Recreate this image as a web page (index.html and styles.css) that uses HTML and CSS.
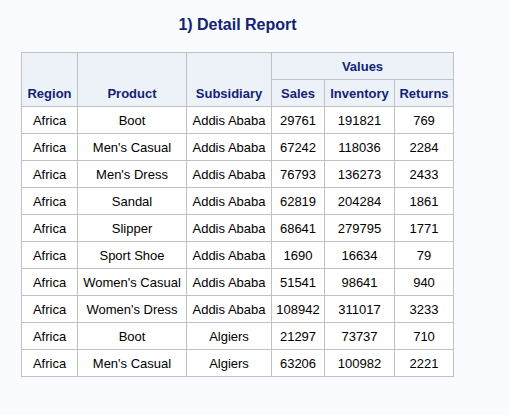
FILE: index.html
```html
<!DOCTYPE html>
<html>
<head>
<meta charset="utf-8">
<link rel="stylesheet" href="styles.css">
</head>
<body>
<div class="report">
  <h1 class="title">1) Detail Report</h1>
  <table class="table">
    <colgroup>
      <col class="c-region">
      <col class="c-product">
      <col class="c-sub">
      <col class="c-sales">
      <col class="c-inv">
      <col class="c-ret">
    </colgroup>
    <thead>
      <tr>
        <th rowspan="2" class="bottom">Region</th>
        <th rowspan="2" class="bottom">Product</th>
        <th rowspan="2" class="bottom">Subsidiary</th>
        <th colspan="3">Values</th>
      </tr>
      <tr>
        <th>Sales</th>
        <th>Inventory</th>
        <th>Returns</th>
      </tr>
    </thead>
    <tbody>
      <tr><td>Africa</td><td>Boot</td><td>Addis Ababa</td><td>29761</td><td>191821</td><td>769</td></tr>
      <tr><td>Africa</td><td>Men's Casual</td><td>Addis Ababa</td><td>67242</td><td>118036</td><td>2284</td></tr>
      <tr><td>Africa</td><td>Men's Dress</td><td>Addis Ababa</td><td>76793</td><td>136273</td><td>2433</td></tr>
      <tr><td>Africa</td><td>Sandal</td><td>Addis Ababa</td><td>62819</td><td>204284</td><td>1861</td></tr>
      <tr><td>Africa</td><td>Slipper</td><td>Addis Ababa</td><td>68641</td><td>279795</td><td>1771</td></tr>
      <tr><td>Africa</td><td>Sport Shoe</td><td>Addis Ababa</td><td>1690</td><td>16634</td><td>79</td></tr>
      <tr><td>Africa</td><td>Women's Casual</td><td>Addis Ababa</td><td>51541</td><td>98641</td><td>940</td></tr>
      <tr><td>Africa</td><td>Women's Dress</td><td>Addis Ababa</td><td>108942</td><td>311017</td><td>3233</td></tr>
      <tr><td>Africa</td><td>Boot</td><td>Algiers</td><td>21297</td><td>73737</td><td>710</td></tr>
      <tr><td>Africa</td><td>Men's Casual</td><td>Algiers</td><td>63206</td><td>100982</td><td>2221</td></tr>
    </tbody>
  </table>
</div>
</body>
</html>
```
FILE: styles.css
```css
html, body {
  margin: 0;
  padding: 0;
  background: #fafbfe;
}
body {
  padding: 16px 0 0 21px;
  font-family: "Liberation Sans", Arial, sans-serif;
}
.report {
  display: inline-flex;
  flex-direction: column;
  align-items: center;
}
.title {
  margin: 0 0 18px 0;
  font-size: 16px;
  line-height: 18px;
  font-weight: bold;
  color: #112277;
}
.table {
  border-collapse: collapse;
  table-layout: fixed;
  width: 433px;
  font-size: 13px;
  line-height: 15px;
}
.c-region { width: 56px; }
.c-product { width: 109px; }
.c-sub { width: 85px; }
.c-sales { width: 53px; }
.c-inv { width: 70px; }
.c-ret { width: 59px; }
.table th, .table td {
  border: 1px solid #c1c1c1;
  padding: 6px 0 5px 0;
  text-align: center;
  vertical-align: middle;
  white-space: nowrap;
}
.table th {
  background: #edf2f9;
  color: #112277;
  font-weight: bold;
}
.table th.bottom {
  vertical-align: bottom;
}
.table td {
  background: #ffffff;
  color: #000000;
}
```
